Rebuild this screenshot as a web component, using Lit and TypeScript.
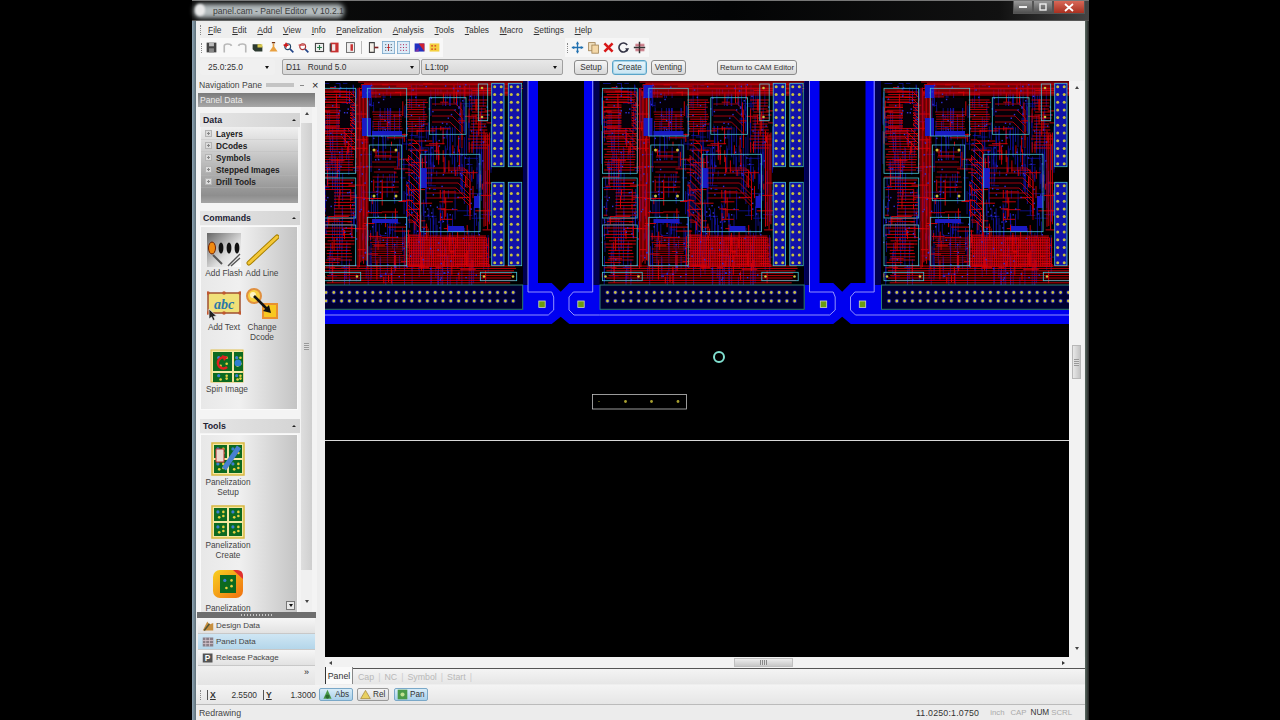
import {LitElement, html, css, svg} from 'lit';
import {customElement} from 'lit/decorators.js';

// seeded so the board looks the same on every load
let seed = 7;
const rnd = () => {
    seed = (seed + 0x6d2b79f5) | 0;
    let t = Math.imul(seed ^ (seed >>> 15), 1 | seed);
    t = (t + Math.imul(t ^ (t >>> 7), 61 | t)) ^ t;
    return ((t ^ (t >>> 14)) >>> 0) / 4294967296;
};
const f = (n: number) => n.toFixed(1);

const hBundle = (x0: number, y0: number, x1: number, y1: number, step: number, jit = 3) => {
    let d = '';
    for (let y = y0; y <= y1; y += step) {
        d += `M${f(x0 + rnd() * jit)} ${f(y)}H${f(x1 - rnd() * jit)}`;
    }
    return d;
};
const vBundle = (x0: number, y0: number, x1: number, y1: number, step: number, jit = 3) => {
    let d = '';
    for (let x = x0; x <= x1; x += step) {
        d += `M${f(x)} ${f(y0 + rnd() * jit)}V${f(y1 - rnd() * jit)}`;
    }
    return d;
};
const chamfer = (x0: number, y0: number, x1: number, y1: number, step: number) => {
    let d = '';
    for (let i = 0; y0 + i * step <= y1; i++) {
        const y = y0 + i * step;
        const run = 6 + (i % 5) * 2;
        d += `M${f(x0)} ${f(y)}H${f(x1 - run)}l${run} ${run}V${f(y + run + 14)}`;
    }
    return d;
};
const fragments = (count: number, minLen: number, maxLen: number) => {
    let d = '';
    for (let i = 0; i < count; i++) {
        const len = minLen + rnd() * (maxLen - minLen);
        const dir = rnd() < .5 ? 'h' : 'v';
        d += `M${f(320 + rnd() * 168)} ${f(83 + rnd() * 195)}${dir}${f(len)}`;
    }
    return d;
};

const redBase = [
    hBundle(358, 82, 524, 95, 1.3, 6),
    vBundle(358, 86, 368, 270, 1.4, 10),
    hBundle(405, 100, 428, 132, 2.4, 4),
    hBundle(468, 100, 490, 150, 3, 4),
    hBundle(405, 236, 490, 268, 1.6, 4),
    vBundle(405, 236, 490, 268, 2.2, 2),
    hBundle(322, 92, 356, 170, 2.6, 4),
    hBundle(322, 180, 356, 262, 3.2, 6),
    chamfer(322, 92, 356, 140, 5),
    hBundle(322, 266, 520, 283, 2.4, 12),
    chamfer(408, 140, 420, 220, 5),
    vBundle(484, 130, 490, 230, 1.8, 6),
    fragments(240, 4, 20),
].join('');

const redTop = [
    hBundle(372, 112, 403, 130, 2.4, 2),
    hBundle(370, 238, 405, 263, 2.2, 3),
    hBundle(372, 152, 399, 196, 5, 3),
    chamfer(426, 168, 470, 200, 5),
    chamfer(432, 104, 462, 124, 6),
].join('');

const blueBase = (() => {
    let d = '';
    for (let x = 320; x < 492; x += 2.4) {
        const n = 3 + Math.floor(rnd() * 5);
        for (let i = 0; i < n; i++) {
            const y = 82 + rnd() * 190;
            d += `M${f(x + rnd())} ${f(y)}v${f(8 + rnd() * 30)}`;
        }
    }
    return d + fragments(160, 3, 14);
})();

const vias = Array.from({length: 220}, () => [320 + rnd() * 168, 84 + rnd() * 196]);

const holes = [[374, 98, 27, 10], [432, 106, 26, 20], [340, 104, 10, 24], [326, 190, 8, 26], [376, 160, 18, 14], [436, 176, 24, 14]];
const blocks = [[362, 85, 9, 13], [362, 118, 9, 18], [372, 131, 30, 5], [420, 168, 7, 20], [448, 226, 16, 6], [372, 219, 26, 4], [474, 196, 6, 12]];
const cyan = [
    [367.3, 88.3, 39.4, 47.7], [429.3, 97.7, 36.7, 36.6], [369.3, 145, 32.4, 55.7], [420.7, 154.3, 59.3, 77.4],
    [367.3, 217.3, 39.4, 48.4], [321, 88.3, 34.7, 85], [321, 178, 34.7, 40], [321, 225, 34.7, 40.7],
    [478.3, 84, 9.4, 36.7], [321, 272.3, 39.7, 8.4], [480.3, 272.3, 36.4, 8.4],
    [491.7, 83.3, 12.3, 83.4], [508.3, 83.3, 13.4, 83.4], [491.7, 182.3, 12.3, 83.4], [508.3, 182.3, 13.4, 83.4],
];
const connectors = [[491.7, 83.3], [508.3, 83.3], [491.7, 182.3], [508.3, 182.3]];

const range = (n: number) => Array.from({length: n}, (_, i) => i);

const tile = svg`
    <rect x="318" y="81" width="210" height="204" fill="#000"/>
    <path d=${blueBase} stroke="#1414b4" stroke-width=".7" fill="none"/>
    <path d=${redBase} stroke="#d8000a" stroke-width=".9" fill="none"/>
    ${holes.map(h => svg`<rect x=${h[0]} y=${h[1]} width=${h[2]} height=${h[3]} fill="#050008"/>`)}
    ${blocks.map(h => svg`<rect x=${h[0]} y=${h[1]} width=${h[2]} height=${h[3]} fill="#1a1ac4"/>`)}
    <path d=${redTop} stroke="#c8000a" stroke-width=".8" fill="none"/>
    ${vias.map(v => svg`<rect x=${f(v[0])} y=${f(v[1])} width="1.4" height="1.4" fill="#3030d8"/>`)}
    <path fill-rule="evenodd" fill="#0000f0" d="M523 81H601V324H318V310H523ZM538 81V283H551.7L560.7 291.7L569.3 283H584V81ZM560.7 316.7L551.7 324H569.3Z"/>
    <rect x="523" y="81" width="5" height="204" fill="#000050"/>
    <rect x="593.4" y="81" width="6.6" height="204" fill="#000050"/>
    <rect x="318.5" y="285" width="204.2" height="24.3" fill="#00002e" stroke="#2c7c78"/>
    ${range(2).map(r => range(25).map(i => svg`
        <circle cx=${326 + i * 7.8} cy=${292.5 + r * 8.5} r="2.3" fill="#14149c"/>
        <circle cx=${326 + i * 7.8} cy=${292.5 + r * 8.5} r="1.4" fill="#c8c040"/>`))}
    ${connectors.map(c => svg`
        <rect x=${c[0]} y=${c[1]} width="12.5" height="83" fill="#1212a8"/>
        ${range(11).map(i => svg`
            <circle cx=${c[0] + 3} cy=${c[1] + 3.5 + i * 7.7} r="1.5" fill="#c8c040"/>
            <circle cx=${c[0] + 9.5} cy=${c[1] + 3.5 + i * 7.7} r="1.5" fill="#c8c040"/>`)}`)}
    ${[[374, 150], [396, 150], [374, 196], [396, 196]].map(p => svg`<circle cx=${p[0]} cy=${p[1]} r="1.5" fill="#c8c040"/>`)}
    ${[[482, 88], [482, 117], [324, 276.5], [357, 276.5], [484, 276.5], [513, 276.5]].map(p => svg`<circle cx=${p[0]} cy=${p[1]} r="1.3" fill="#c8c040"/>`)}
    ${cyan.map(c => svg`<rect x=${c[0]} y=${c[1]} width=${c[2]} height=${c[3]} fill="none" stroke="#48c4d4" stroke-width=".8"/>`)}
    <path d="M528 81V292H551.7L553.7 297V310L548.3 315H318M592.7 81V292H573.3L569 297V310L574 315H600" fill="none" stroke="#b8b8ff" stroke-width=".8"/>
    <rect x="538.8" y="301" width="6.4" height="6.4" fill="#6c9c10" stroke="#d0d8c0" stroke-width=".8"/>
    <rect x="577.8" y="301" width="6.4" height="6.4" fill="#6c9c10" stroke="#d0d8c0" stroke-width=".8"/>
`;

// toolbar glyphs, 16 unit box
const tb: Record<string, unknown> = {
    save: svg`<path d="M2 2H14V14H2Z" fill="#444"/><rect x="5" y="2.5" width="6" height="4" fill="#bbb"/><rect x="5" y="9" width="6" height="5" fill="#888"/>`,
    undo: svg`<path d="M4 14V6C4 3 12 3 13 6" fill="none" stroke="#b8b8b8" stroke-width="2"/>`,
    redo: svg`<path d="M12 14V6C12 3 4 3 3 6" fill="none" stroke="#b8b8b8" stroke-width="2"/>`,
    open: svg`<path d="M2 4H12L14 7V13H5L2 10Z" fill="#2c3a30"/><path d="M8 4H14V8H8Z" fill="#d8c84c"/>`,
    flask: svg`<path d="M7 3H9V7L13 13H3L7 7Z" fill="#e8a040"/><path d="M6 2H10" stroke="#703010" stroke-width="1.6"/>`,
    zoomIn: svg`<circle cx="7" cy="7" r="3.6" fill="#fff" stroke="#246" stroke-width="1.4"/><path d="M10 10L14 14" stroke="#248" stroke-width="2"/><path d="M5 2V8M2 5H8" stroke="#d01818" stroke-width="2"/>`,
    zoomOut: svg`<circle cx="7" cy="7" r="3.6" fill="#fff" stroke="#a33" stroke-width="1.4"/><path d="M10 10L14 14" stroke="#248" stroke-width="2"/><path d="M2 5H9" stroke="#d04040" stroke-width="1.6"/>`,
    fit: svg`<rect x="3" y="3" width="10" height="10" fill="#eee" stroke="#444" stroke-width="1.3"/><path d="M8 5V11M5 8H11" stroke="#274" stroke-width="1.4"/>`,
    pageRed: svg`<rect x="3" y="2" width="10" height="12" fill="#c83030"/><rect x="5" y="4" width="4" height="8" fill="#f4e8e8"/><rect x="2" y="3" width="2" height="10" fill="#444"/>`,
    pageWhite: svg`<rect x="3" y="2" width="10" height="12" fill="#eee" stroke="#555"/><rect x="8" y="4" width="3" height="8" fill="#c83030"/>`,
    bracket: svg`<path d="M3 2H9V14H3Z" fill="#f4f0e8" stroke="#444" stroke-width="1.3"/><path d="M9 8H14" stroke="#802020" stroke-width="2"/>`,
    gridA: svg`<rect x=".5" y=".5" width="15" height="15" fill="#dcecf8" stroke="#7aa8cc"/><path d="M4 4.5H12M4 8H12M4 11.5H12" stroke="#345" stroke-width="1.2" stroke-dasharray="1.2 2.2"/><path d="M8 4V12M6 8H10" stroke="#c02020" stroke-width="1"/>`,
    gridB: svg`<rect x=".5" y=".5" width="15" height="15" fill="#dcecf8" stroke="#7aa8cc"/><path d="M4 4.5H12M4 8H12M4 11.5H12" stroke="#b02050" stroke-width="1.2" stroke-dasharray="1.2 2.2"/>`,
    colors: svg`<rect x="2" y="3" width="12" height="10" fill="#2030c0"/><path d="M7 3H14V13Z" fill="#d02030"/><path d="M2 13L7 8V13Z" fill="#8030a0"/>`,
    dots: svg`<rect x="2" y="3" width="12" height="10" fill="#f4d040"/><path d="M4 6H12M4 10H12" stroke="#d03020" stroke-width="1.8" stroke-dasharray="2 2"/>`,
    move: svg`<path d="M8 1V15M1 8H15" stroke="#2070b0" stroke-width="1.6"/><path d="M8 1L6 4H10ZM8 15L6 12H10ZM1 8L4 6V10ZM15 8L12 6V10Z" fill="#2070b0"/>`,
    copy: svg`<rect x="2" y="2" width="8" height="10" fill="#f0e0c0" stroke="#a08050"/><rect x="6" y="5" width="8" height="10" fill="#f4d8a8" stroke="#a08050"/>`,
    del: svg`<path d="M3 3L13 13M13 3L3 13" stroke="#d81818" stroke-width="3.2"/>`,
    rotate: svg`<path d="M12.5 5A5.5 5.5 0 1 0 13 10" fill="none" stroke="#334" stroke-width="2"/><path d="M10 9H15L12.5 13Z" fill="#334"/>`,
    gridC: svg`<rect x="3" y="3" width="11" height="10" fill="#e8b8c0"/><path d="M8 1V15M1 8H15" stroke="#333" stroke-width="1.8"/><path d="M3 5H14M3 11H14" stroke="#a03040"/>`,
};

const leftTools = ['save', 'undo', 'redo', 'open', 'flask', 'zoomIn', 'zoomOut', 'fit', 'pageRed', 'pageWhite'];
const midTools = ['bracket', 'gridA', 'gridB', 'colors', 'dots'];
const rightTools = ['move', 'copy', 'del', 'rotate', 'gridC'];
const menus = ['File', 'Edit', 'Add', 'View', 'Info', 'Panelization', 'Analysis', 'Tools', 'Tables', 'Macro', 'Settings', 'Help'];
const dataRows = ['Layers', 'DCodes', 'Symbols', 'Stepped Images', 'Drill Tools'];

const miniBoard = (x: number, y: number, w: number, h: number) => svg`
    <rect x=${x} y=${y} width=${w} height=${h} fill="#0c6a20"/>
    <circle cx=${x + w * .3} cy=${y + h * .3} r="1.6" fill="#3a80d0"/>
    <circle cx=${x + w * .72} cy=${y + h * .3} r="1.3" fill="#e8d040"/>
    <circle cx=${x + w * .72} cy=${y + h * .62} r="1.3" fill="#e8d040"/>
    <circle cx=${x + w * .4} cy=${y + h * .72} r="1.3" fill="#e8d040"/>`;

const bigIcons: Record<string, unknown> = {
    flash: svg`
        <defs><linearGradient id="fg" x1="0" y1="0" x2="1" y2="1"><stop offset="0" stop-color="#666"/><stop offset=".6" stop-color="#ddd"/><stop offset="1" stop-color="#fff"/></linearGradient></defs>
        <rect width="34" height="34" fill="url(#fg)"/>
        <ellipse cx="5" cy="15" rx="3.5" ry="6" fill="#f08a10" stroke="#702000"/>
        <ellipse cx="14" cy="15" rx="2.4" ry="5.5" fill="#111"/><ellipse cx="22" cy="15" rx="2.4" ry="5.5" fill="#111"/><ellipse cx="30" cy="15" rx="2.4" ry="5.5" fill="#111"/>
        <path d="M6 22L15 31" stroke="#555" stroke-width="2"/><path d="M21 33L33 21M24 33L33 25" stroke="#555" stroke-width="1.4"/>`,
    line: svg`<path d="M4 30L32 4" stroke="#a88000" stroke-width="5" stroke-linecap="round"/><path d="M4 30L32 4" stroke="#f4c838" stroke-width="3" stroke-linecap="round"/>`,
    text: svg`
        <rect x="1" y="6" width="32" height="20" fill="#f0e078" stroke="#a05030" stroke-width="1.5"/>
        ${[[1, 6], [17, 6], [33, 6], [1, 26], [17, 26], [33, 26]].map(p => svg`<circle cx=${p[0]} cy=${p[1]} r="1.8" fill="#c05830"/>`)}
        <text x="17" y="22" text-anchor="middle" class="abc">abc</text>
        <path d="M2 22V32L4.5 30L6 33.5L8 32.5L6.5 29.5L9.5 29Z" fill="#222" stroke="#eee" stroke-width=".7"/>`,
    dcode: svg`
        <rect x="18" y="17" width="14" height="14" fill="#f8c820" stroke="#e89030" stroke-width="2"/>
        <circle cx="9" cy="9" r="7" fill="#f8d040" stroke="#e09040" stroke-width="2"/><circle cx="8" cy="8" r="3" fill="#fff4c0"/>
        <path d="M9 9L24 24" stroke="#111" stroke-width="2.6"/><path d="M26 26L18 24L24 18Z" fill="#111"/>`,
    spin: svg`
        <rect x="1" y="1" width="32" height="32" fill="#f4e8a0" stroke="#e0c050"/>
        ${miniBoard(3, 3, 19, 19)}${miniBoard(24, 3, 9, 19)}${miniBoard(3, 24, 19, 9)}${miniBoard(24, 24, 9, 9)}
        <path d="M16 9A5.5 5.5 0 1 0 17 18" fill="none" stroke="#e02020" stroke-width="2.6"/><path d="M12 6L18 8L14 12Z" fill="#e02020"/>
        <circle cx="28" cy="14" r="3.5" fill="#3080d0"/>`,
    setup: svg`
        <rect x="1" y="1" width="32" height="32" fill="#f4e8a0" stroke="#d8b840" stroke-width="1.5"/>
        ${miniBoard(3, 3, 13, 13)}${miniBoard(18, 3, 13, 13)}${miniBoard(3, 18, 13, 13)}${miniBoard(18, 18, 13, 13)}
        <path d="M13 27L28 5" stroke="#4880d0" stroke-width="5"/><path d="M5 7H13V20H5Z" fill="#e8d8d0" stroke="#c03030"/>`,
    create: svg`
        <rect x="1" y="1" width="32" height="32" fill="#f4e8a0" stroke="#d8b840" stroke-width="1.5"/>
        ${miniBoard(3, 3, 13, 13)}${miniBoard(18, 3, 13, 13)}${miniBoard(3, 18, 13, 13)}${miniBoard(18, 18, 13, 13)}`,
    third: svg`
        <defs><linearGradient id="og" x1="0" y1="0" x2="1" y2="1"><stop offset="0" stop-color="#f8d020"/><stop offset="1" stop-color="#f07010"/></linearGradient></defs>
        <rect x="2" y="2" width="30" height="28" rx="7" fill="url(#og)"/><path d="M22 2H26Q32 2 32 8V11Z" fill="#e03030"/>
        ${miniBoard(9, 7, 16, 18)}`,
    design: svg`<path d="M1 14L7 2L10 6L15 4V14Z" fill="#c89040"/><path d="M3 14L10 5" stroke="#553" stroke-width="2"/>`,
    panel: svg`<rect x="1" y="2" width="14" height="12" fill="#8a7f88"/><path d="M1 6H15M1 10H15M5 2V14M10 2V14" stroke="#d8c8d0"/>`,
    release: svg`<rect x="1" y="2" width="13" height="12" fill="#555"/><text x="7.5" y="12" text-anchor="middle" class="pkg">P</text>`,
};

const command = (icon: string, label: string[], cls = '') => html`
    <div class="cmd ${cls}">
        <svg class="big" viewBox="0 0 34 34">${bigIcons[icon]}</svg>
        ${label.map(l => html`<span>${l}</span>`)}
    </div>`;

const small = (name: string) => html`<svg class="tool" viewBox="0 0 16 16">${tb[name]}</svg>`;

@customElement('app-root')
export class AppRoot extends LitElement {
    static override styles = css`
        :host { display: block; width: 1280px; height: 720px; background: #000; overflow: hidden;
            font-family: "Liberation Sans", Arial, sans-serif; font-size: 8.3px; color: #333; }
        svg { display: block; }
        .window { margin-left: 192px; width: 897px; height: 720px; display: flex; flex-direction: column; padding: 0 4px;
            box-sizing: border-box;
            background: linear-gradient(90deg, #8ea4b4 0, #5d6f78 4px, transparent 4px, transparent 893px, #5a6a62 893px, #222 897px); }
        .titlebar { height: 21px; margin: 0 -4px; flex: none; position: relative; display: flex; align-items: center;
            background: linear-gradient(90deg, #0c0c0c, #030405 60%, #111 90%, #444); border-top: 1px solid #777; border-bottom: 1px solid #555;
            box-sizing: border-box; color: #3c3c3c; font-size: 8.6px; padding-left: 21px; white-space: pre; }
        .titlebar::before { content: ""; position: absolute; left: 2px; top: 3px; width: 150px; height: 14px; background: #b4bcbe; filter: blur(2.5px); border-radius: 6px; }
        .titlebar span { position: relative; }
        .appicon { position: absolute; left: 3px; top: 3px; width: 10px; height: 12px; background: #e8e8e8; border-radius: 5px; filter: blur(.8px); }
        .caption { position: absolute; right: 4px; top: 0; height: 13px; display: flex; }
        .capbtn { width: 20px; height: 13px; display: grid; place-items: center; background: linear-gradient(#999, #505050); border: 1px solid #555; border-top: none; box-sizing: border-box; }
        .capbtn.close { width: 32px; background: linear-gradient(#d86858, #a83020); }
        .client { flex: 1; display: flex; flex-direction: column; background: #eeeeee; min-height: 0; }
        .menubar { height: 17px; flex: none; display: flex; align-items: center; gap: 10.7px; padding-left: 12px; font-size: 8.4px; position: relative; }
        .menubar u { text-decoration: underline; }
        .grip { width: 1px; height: 10px; border-left: 1px dotted #888; flex: none; }
        .menubar .grip { position: absolute; left: 4px; top: 4px; }
        .toolrow { height: 19px; flex: none; display: flex; align-items: center; }
        .strip { display: flex; align-items: center; height: 19px; background: #f8f8f8; }
        .strip.one { margin-left: 4px; width: 243px; padding-left: 1px; box-sizing: border-box; }
        .strip.two { margin-left: 122px; width: 84px; background: #f6f6f6; padding-left: 2px; box-sizing: border-box; }
        .tool { width: 13px; height: 13px; margin: 0 1.2px; flex: none; }
        .sep { width: 1px; height: 13px; background: #bbb; margin: 0 3.4px; flex: none; }
        .strip .grip { margin-right: 1px; }
        .formrow { height: 20px; flex: none; display: flex; align-items: center; padding-left: 4px; }
        .combo { height: 16px; box-sizing: border-box; display: flex; align-items: center; padding: 0 5px 0 3px; justify-content: space-between; white-space: pre;
            background: linear-gradient(#e8e8e8, #d8d8d8); border: 1px solid #a0a0a0; border-radius: 2px; font-size: 8.4px; }
        .combo.plain { width: 75px; background: #f0f0f0; border-color: #f0f0f0; margin-right: 7px; padding-left: 7px; }
        .combo.dcode { width: 138px; margin-right: 1px; }
        .combo.layer { width: 142px; margin-right: 11px; }
        .caret { width: 0; height: 0; border: 2.5px solid transparent; border-top: 3px solid #111; border-bottom: none; }
        .btn { height: 15px; box-sizing: border-box; border: 1px solid #8a8a8a; border-radius: 3px; background: linear-gradient(#f6f6f6, #d8d8d8);
            display: grid; place-items: center; font-size: 8.2px; margin-right: 4px; white-space: nowrap; }
        .btn.setup { width: 34px; }
        .btn.create { width: 35px; border-color: #5aa4c8; background: linear-gradient(#eaf6fc, #c8e4f2); box-shadow: 0 0 0 1px #a8d4e8 inset; }
        .btn.venting { width: 35px; margin-right: 31px; }
        .btn.back { width: 80px; font-size: 7.8px; }
        .main { flex: 1; display: flex; min-height: 0; }
        .nav { width: 121px; flex: none; display: flex; flex-direction: column; margin-right: 8px; }
        .navhead { height: 16px; flex: none; display: flex; align-items: center; padding-left: 3px; font-size: 8.6px; color: #444; white-space: nowrap; }
        .navhead .bar { width: 28px; height: 4px; margin-left: 4px; background: #c4c4c4; flex: none; }
        .navhead .min { margin-left: 6px; width: 4px; height: 1px; background: #888; flex: none; }
        .navhead .x { margin-left: 8px; font-size: 11px; color: #222; line-height: 11px; }
        .panelbar { height: 14px; flex: none; margin: 0 0 0 2px; width: 117px; background: linear-gradient(#7a7a7a, #a8a8a8); color: #ececec; display: flex; align-items: center; padding-left: 2px; box-sizing: border-box; font-size: 8.6px; }
        .navbody { height: 505px; flex: none; display: flex; padding-left: 4px; background: #f4f4f4; overflow: hidden; }
        .tasks { width: 102px; flex: none; padding-top: 6px; overflow: hidden; position: relative; }
        .sechead { height: 14px; width: 100px; display: flex; align-items: center; justify-content: space-between; padding: 0 4px 0 3px; box-sizing: border-box;
            background: linear-gradient(90deg, #e6e6e6, #d4d4d4); font-weight: bold; font-size: 8.8px; color: #223; }
        .chev { width: 0; height: 0; border: 2px solid transparent; border-bottom: 2px solid #222; border-top: none; }
        .datalist { height: 76px; width: 97px; margin-left: 1px; box-sizing: border-box; padding-top: 1px; background: linear-gradient(#f0f0f0, #8e8e8e 90%, #a4a4a4); margin-bottom: 8px; }
        .datarow { height: 12px; display: flex; align-items: center; gap: 4px; padding-left: 4px; font-weight: bold; font-size: 8.3px; color: #222; border-bottom: 1px solid #bbbbbb55; box-sizing: border-box; }
        .plus { width: 7px; height: 7px; border: 1px solid #b4b4b4; box-sizing: border-box; flex: none;
            background: linear-gradient(#888, #888) center / 3px 1px no-repeat, linear-gradient(#888, #888) center / 1px 3px no-repeat, #dcdcdc; }
        .content { width: 98px; margin-top: 1px; box-sizing: border-box; background: linear-gradient(90deg, #e8e8e8, #f0f0f0 40%, #c4c4c4); border: 1px solid #fafafa; }
        .content.commands { height: 184px; margin-bottom: 9px; display: grid; grid-template-columns: 38px 38px; grid-auto-rows: min-content; padding: 6px 0 0 4px; }
        .content.tools { height: 190px; padding: 7px 0 0 6px; position: relative; }
        .cmd { display: flex; flex-direction: column; align-items: center; width: 38px; line-height: 10px; font-size: 8.3px; white-space: nowrap; color: #444; }
        .cmd .big { width: 34px; height: 34px; margin-bottom: 1px; flex: none; }
        .cmd.short { height: 62px; }
        .cmd.flash, .cmd.linee { height: 54px; }
        .cmd.spin { grid-column: 1 / span 2; margin-left: 3px; }
        .tools .cmd { width: 42px; height: 63px; }
        .scrollv { width: 11px; flex: none; margin-left: -1px; position: relative; background: #f0f0f0; display: flex; flex-direction: column; align-items: center; }
        .scrollv .thumb { margin-top: 8px; width: 100%; height: 447px; background: linear-gradient(90deg, #dedede, #cfcfcf); display: grid; place-items: center; }
        .gripdots { width: 5px; height: 7px; background: repeating-linear-gradient(#999 0 1px, #ddd 1px 2px); }
        .arrow-up { width: 0; height: 0; border: 2px solid transparent; border-bottom: 3px solid #444; border-top: none; margin-top: 5px; }
        .arrow-dn { width: 0; height: 0; border: 2px solid transparent; border-top: 3px solid #444; border-bottom: none; margin-top: 30px; }
        .tasksdrop { position: absolute; right: 7px; bottom: 2px; width: 9px; height: 9px; box-sizing: border-box; border: 1px solid #777; background: #e8e8e8; display: grid; place-items: center; }
        .tasksdrop i { width: 0; height: 0; border: 2px solid transparent; border-top: 3px solid #111; border-bottom: none; }
        .splitter { height: 6px; flex: none; margin-left: 1px; width: 119px; background: #6e6e6e; display: grid; place-items: center; }
        .splitter i { width: 32px; height: 2px; background: repeating-linear-gradient(90deg, #c8c8c8 0 1px, transparent 1px 3px); }
        .navbtn { height: 16px; width: 117px; margin-left: 2px; flex: none; display: flex; align-items: center; gap: 2px; padding-left: 4px; box-sizing: border-box; border-bottom: 1px solid #c8c8c8;
            background: linear-gradient(#f6f6f6, #e2e2e2); font-size: 8px; color: #444; }
        .navbtn svg { width: 12px; height: 12px; }
        .navbtn.on { background: linear-gradient(#cfe6f4, #b4d6ea); }
        .navfoot { flex: 1; width: 117px; margin-left: 2px; box-sizing: border-box; display: flex; justify-content: flex-end; padding: 3px 6px 0 0; color: #222; font-size: 9px; line-height: 6px; background: linear-gradient(#f0f0f0, #e4e4e4); }
        .work { flex: 1; display: flex; flex-direction: column; min-width: 0; padding-top: 4px; }
        .viewrow { display: flex; height: 576px; flex: none; }
        .board { width: 744px; height: 576px; flex: none; background: #000; filter: blur(.6px); }
        .sbv { width: 15px; flex: none; display: flex; flex-direction: column; align-items: center; background: #f2f2f2; position: relative; }
        .sbv .arrow-up { margin-top: 5px; }
        .sbv .thumb { margin-top: 256px; width: 9px; height: 34px; box-sizing: border-box; background: linear-gradient(90deg, #e8e8e8, #c4c4c4); border: 1px solid #b8b8b8; display: grid; place-items: center; }
        .sbv .arrow-dn { margin-top: 268px; }
        .sbh { height: 12px; flex: none; display: flex; align-items: center; background: #f2f2f2; padding-left: 4px; border-bottom: 1px solid #555; box-sizing: border-box; }
        .left { width: 0; height: 0; border: 2px solid transparent; border-right: 3px solid #444; border-left: none; }
        .right { width: 0; height: 0; border: 2px solid transparent; border-left: 3px solid #333; border-right: none; margin-left: 269px; }
        .hthumb { margin-left: 402px; width: 59px; height: 9px; box-sizing: border-box; background: linear-gradient(#ececec, #c8c8c8); border: 1px solid #c0c0c0; display: grid; place-items: center; }
        .hdots { width: 7px; height: 5px; background: repeating-linear-gradient(90deg, #888 0 1px, #ddd 1px 2px); }
        .tabs { height: 15px; flex: none; display: flex; align-items: center; color: #b8b8b8; font-size: 8.8px; background: linear-gradient(#f4f4f4, #e6e6e6); }
        .tabs .active { width: 28px; height: 17px; margin-top: -2px; background: #fafafa; color: #333; border-left: 1px solid #333; border-right: 1px solid #888; box-sizing: border-box; display: grid; place-items: center; margin-right: 5px; }
        .tabs i { font-style: normal; margin: 0 4px; color: #ccc; }
        .coords { height: 20px; flex: none; display: flex; align-items: center; background: linear-gradient(#f4f4f4, #e6e6e6); padding-left: 4px; border-bottom: 1px solid #bbb; box-sizing: border-box; }
        .axis { width: 10px; margin-left: 5px; font-size: 8.6px; font-weight: bold; text-decoration: underline; border-left: 1px solid #555; padding-left: 2px; height: 10px; line-height: 10px; flex: none; }
        .num { width: 38px; text-align: right; font-size: 8.4px; padding-right: 1px; flex: none; box-sizing: border-box; }
        .num.b { width: 41px; margin-right: 2px; }
        .pill { height: 13px; box-sizing: border-box; display: flex; align-items: center; gap: 2px; border: 1px solid #7aa8c8; border-radius: 2px; background: linear-gradient(#d8ecf8, #a8d0ea); font-size: 8.2px; padding-left: 2px; margin-right: 4px; flex: none; }
        .pill svg { width: 11px; height: 11px; }
        .pill.abs { width: 34px; }
        .pill.rel { width: 32px; background: linear-gradient(#f4f4f4, #dcdcdc); border-color: #999; }
        .pill.pan { width: 34px; margin-left: 1px; }
        .status { height: 15px; flex: none; display: flex; align-items: center; padding-left: 3px; font-size: 8.8px; color: #444; background: #ececec; }
        .status .xy { margin-left: auto; font-size: 8.8px; color: #333; letter-spacing: .2px; }
        .status b { font-weight: normal; margin-left: 5px; color: #aaa; font-size: 7.8px; }
        .status .inch { margin-left: 11px; margin-right: 1px; }
        .status b.on { color: #333; font-size: 8.2px; margin-left: 4px; margin-right: -3px; }
        .status .end { margin-right: 13px; }
        .abc { font: italic bold 14px "Liberation Serif", serif; fill: #2a78a8; }
        .pkg { font: bold 11px "Liberation Sans", sans-serif; fill: #fff; }
    `;

    override render() {
        return html`
        <div class="window">
            <div class="titlebar">
                <div class="appicon"></div>
                <span>panel.cam - Panel Editor  V 10.2.1</span>
                <div class="caption">
                    <div class="capbtn"><svg width="9" height="4"><rect y="1" width="8" height="2" fill="#eee"/></svg></div>
                    <div class="capbtn"><svg width="9" height="8"><rect x="1" y="1" width="6" height="6" fill="none" stroke="#eee" stroke-width="1.4"/></svg></div>
                    <div class="capbtn close"><svg width="10" height="9"><path d="M1 1L9 8M9 1L1 8" stroke="#fff" stroke-width="1.8"/></svg></div>
                </div>
            </div>
            <div class="client">
                <div class="menubar">
                    <div class="grip"></div>
                    ${menus.map(m => html`<span><u>${m[0]}</u>${m.slice(1)}</span>`)}
                </div>
                <div class="toolrow">
                    <div class="strip one">
                        <div class="grip"></div>
                        ${leftTools.map(small)}
                        <div class="sep"></div>
                        ${midTools.map(small)}
                    </div>
                    <div class="strip two">
                        <div class="grip"></div>
                        ${rightTools.map(small)}
                    </div>
                </div>
                <div class="formrow">
                    <div class="combo plain"><span>25.0:25.0</span><i class="caret"></i></div>
                    <div class="combo dcode"><span>D11   Round 5.0</span><i class="caret"></i></div>
                    <div class="combo layer"><span>L1:top</span><i class="caret"></i></div>
                    <div class="btn setup">Setup</div>
                    <div class="btn create">Create</div>
                    <div class="btn venting">Venting</div>
                    <div class="btn back">Return to CAM Editor</div>
                </div>
                <div class="main">
                    <div class="nav">
                        <div class="navhead">Navigation Pane<div class="bar"></div><div class="min"></div><div class="x">×</div></div>
                        <div class="panelbar">Panel Data</div>
                        <div class="navbody">
                            <div class="tasks">
                                <div class="sechead">Data<i class="chev"></i></div>
                                <div class="datalist">
                                    ${dataRows.map(r => html`<div class="datarow"><i class="plus"></i>${r}</div>`)}
                                </div>
                                <div class="sechead">Commands<i class="chev"></i></div>
                                <div class="content commands">
                                    ${command('flash', ['Add Flash'], 'flash')}
                                    ${command('line', ['Add Line'], 'linee')}
                                    ${command('text', ['Add Text'], 'short')}
                                    ${command('dcode', ['Change', 'Dcode'], 'short')}
                                    ${command('spin', ['Spin Image'], 'spin')}
                                </div>
                                <div class="sechead">Tools<i class="chev"></i></div>
                                <div class="content tools">
                                    ${command('setup', ['Panelization', 'Setup'])}
                                    ${command('create', ['Panelization', 'Create'])}
                                    ${command('third', ['Panelization'])}
                                </div>
                                <div class="tasksdrop"><i></i></div>
                            </div>
                            <div class="scrollv">
                                <i class="arrow-up"></i>
                                <div class="thumb"><div class="gripdots"></div></div>
                                <i class="arrow-dn"></i>
                            </div>
                        </div>
                        <div class="splitter"><i></i></div>
                        <div class="navbtn"><svg viewBox="0 0 16 16">${bigIcons.design}</svg>Design Data</div>
                        <div class="navbtn on"><svg viewBox="0 0 16 16">${bigIcons.panel}</svg>Panel Data</div>
                        <div class="navbtn"><svg viewBox="0 0 16 16">${bigIcons.release}</svg>Release Package</div>
                        <div class="navfoot">»</div>
                    </div>
                    <div class="work">
                        <div class="viewrow">
                            <svg class="board" viewBox="325 81 744 576">
                                ${[0, 281.5, 563].map(dx => svg`<g transform="translate(${dx} 0)">${tile}</g>`)}
                                <path d="M325 440.5H1069" stroke="#d8d8d8" stroke-width="1"/>
                                <rect x="592.5" y="394.5" width="94" height="14.5" fill="none" stroke="#c0c0c0" stroke-width=".8"/>
                                ${[625.5, 651.5, 678].map(x => svg`<circle cx=${x} cy="401.5" r="1.4" fill="#a8a030"/>`)}
                                <circle cx="599" cy="401.5" r=".6" fill="#a8a030"/>
                                <circle cx="719" cy="357" r="5" fill="none" stroke="#80e0d0" stroke-width="2"/>
                            </svg>
                            <div class="sbv">
                                <i class="arrow-up"></i>
                                <div class="thumb"><div class="gripdots"></div></div>
                                <i class="arrow-dn"></i>
                            </div>
                        </div>
                        <div class="sbh">
                            <i class="left"></i>
                            <div class="hthumb"><div class="hdots"></div></div>
                            <i class="right"></i>
                        </div>
                        <div class="tabs">
                            <div class="active">Panel</div>
                            Cap<i>|</i>NC<i>|</i>Symbol<i>|</i>Start<i>|</i>
                        </div>
                    </div>
                </div>
                <div class="coords">
                    <div class="grip"></div>
                    <div class="axis">X</div>
                    <div class="num">2.5500</div>
                    <div class="axis">Y</div>
                    <div class="num b">1.3000</div>
                    <div class="pill abs"><svg viewBox="0 0 16 16"><path d="M8 1L14 14H2Z" fill="#4a9a48"/><circle cx="8" cy="11" r="3" fill="#2a6a30"/></svg>Abs</div>
                    <div class="pill rel"><svg viewBox="0 0 16 16"><path d="M8 2L15 14H1Z" fill="#e8d060" stroke="#a08030"/></svg>Rel</div>
                    <div class="pill pan"><svg viewBox="0 0 16 16"><rect x="1" y="1" width="14" height="14" fill="#4a9a48"/><circle cx="8" cy="8" r="3" fill="#c0e090"/></svg>Pan</div>
                </div>
                <div class="status">
                    Redrawing
                    <span class="xy">11.0250:1.0750</span>
                    <b class="inch">inch</b><b>CAP</b><b class="on">NUM</b><b class="end">SCRL</b>
                </div>
            </div>
        </div>`;
    }
}
